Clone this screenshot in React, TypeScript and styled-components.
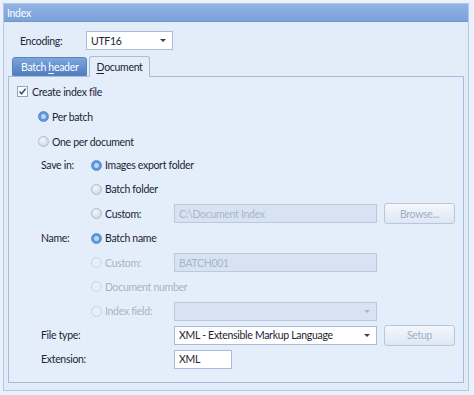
import styled, { createGlobalStyle } from "styled-components";

const GlobalStyle = createGlobalStyle`
  html, body {
    margin: 0;
    padding: 0;
    background: #e9f1fc;
  }
  body {
    font-family: "Lato", "Open Sans", sans-serif;
    font-size: 10.5px;
    letter-spacing: -0.3px;
    color: #1b2535;
  }
`;

const Window = styled.div`
  margin: 3px;
  width: 466px;
  height: 388px;
  box-sizing: border-box;
  border: 1px solid #b4c7de;
  background: #e3edfa;
  display: flex;
  flex-direction: column;
`;

const TitleBar = styled.div`
  height: 17px;
  display: flex;
  align-items: center;
  padding-left: 3px;
  color: #fff;
  background: linear-gradient(#90b4e4, #7aa1da);
  border-bottom: 1px solid #7096cf;
`;

const Content = styled.div`
  flex: 1;
  display: flex;
  flex-direction: column;
  padding: 0 4px 7px 4px;
`;

const EncodingRow = styled.div`
  display: flex;
  align-items: center;
  height: 19px;
  margin-top: 9px;
  padding-left: 12px;
`;

const FieldLabel = styled.span<{ $width?: number }>`
  width: ${(p) => (p.$width ? `${p.$width}px` : "auto")};
  flex-shrink: 0;
`;

const Combo = styled.div<{ $width: number; $disabled?: boolean }>`
  width: ${(p) => p.$width}px;
  height: 19px;
  box-sizing: border-box;
  display: flex;
  align-items: center;
  justify-content: space-between;
  padding: 0 6px 0 4px;
  border: 1px solid ${(p) => (p.$disabled ? "#b9c9de" : "#a9bcd5")};
  background: ${(p) => (p.$disabled ? "#d7e3f3" : "#fff")};
  color: ${(p) => (p.$disabled ? "#a8b5c6" : "#1b2535")};
`;

const Arrow = styled.span<{ $disabled?: boolean }>`
  width: 0;
  height: 0;
  border-left: 3px solid transparent;
  border-right: 3px solid transparent;
  border-top: 3px solid ${(p) => (p.$disabled ? "#a8b5c6" : "#3a3f48")};
`;

const TabStrip = styled.div`
  display: flex;
  align-items: flex-end;
  height: 21px;
  margin-top: 5px;
  padding-left: 4px;
  gap: 2px;
  position: relative;
  z-index: 1;
`;

const Tab = styled.div<{ $active?: boolean }>`
  height: ${(p) => (p.$active ? 21 : 19)}px;
  box-sizing: border-box;
  display: flex;
  align-items: center;
  padding: 0 ${(p) => (p.$active ? 6 : 8)}px;
  border-radius: 3px 3px 0 0;
  border: 1px solid ${(p) => (p.$active ? "#a6bcd9" : "#5a83bf")};
  border-bottom: ${(p) => (p.$active ? "1px solid #e4eefb" : "1px solid #5a83bf")};
  margin-bottom: ${(p) => (p.$active ? -1 : 0)}px;
  background: ${(p) =>
    p.$active ? "#e4eefb" : "linear-gradient(#7ea6dc, #4f7dc0)"};
  color: ${(p) => (p.$active ? "#1b2535" : "#fff")};

  u {
    text-decoration: underline;
    text-underline-offset: 2px;
  }
`;

const TabPanel = styled.div`
  flex: 1;
  border: 1px solid #a6bcd9;
  background: #e4eefb;
  padding: 2px 8px 0 8px;
  display: flex;
  flex-direction: column;
`;

const OptionLine = styled.div<{ $indent?: number; $pitch?: number }>`
  display: flex;
  align-items: center;
  height: ${(p) => p.$pitch ?? 25}px;
  padding-left: ${(p) => p.$indent ?? 0}px;
`;

const Box = styled.span`
  width: 11px;
  height: 11px;
  box-sizing: border-box;
  border: 1px solid #8fa6c5;
  background: linear-gradient(#f6f9fd, #ffffff);
  margin-right: 4px;
  display: flex;
  align-items: center;
  justify-content: center;
`;

const Circle = styled.span<{ $checked?: boolean; $disabled?: boolean }>`
  width: 11px;
  height: 11px;
  box-sizing: border-box;
  border-radius: 50%;
  flex-shrink: 0;
  margin-right: 3px;
  display: flex;
  align-items: center;
  justify-content: center;
  border: 1px solid
    ${(p) => (p.$checked ? "#5b8fd3" : p.$disabled ? "#c9d4e2" : "#aebccd")};
  background: ${(p) =>
    p.$checked
      ? "radial-gradient(circle, #b9d6f6 0 2px, #5f96da 3px)"
      : p.$disabled
      ? "#e7eef8"
      : "radial-gradient(circle at 40% 35%, #f5f7fa, #c6d0dc)"};
`;

const OptionText = styled.span<{ $disabled?: boolean }>`
  color: ${(p) => (p.$disabled ? "#a6b3c4" : "#1b2535")};
  white-space: nowrap;
`;

const OptionsGrid = styled.div`
  display: grid;
  grid-template-columns: 50px 83px 210px 71px;
  grid-auto-rows: 20px;
  row-gap: 4.4px;
  align-items: center;
  padding-left: 24px;
  margin-top: 1px;
`;

const FileGrid = styled(OptionsGrid)`
  row-gap: 4px;
  margin-top: 4px;
`;

const Cell = styled.div<{ $col: number; $span?: number }>`
  grid-column: ${(p) => p.$col} / span ${(p) => p.$span ?? 1};
  display: flex;
  align-items: center;
`;

const TextBox = styled.div<{ $width: number; $disabled?: boolean }>`
  width: ${(p) => p.$width}px;
  height: 19px;
  box-sizing: border-box;
  display: flex;
  align-items: center;
  padding-left: 4px;
  border: 1px solid ${(p) => (p.$disabled ? "#b9c9de" : "#a9bcd5")};
  background: ${(p) => (p.$disabled ? "#d7e3f3" : "#fff")};
  color: ${(p) => (p.$disabled ? "#a8b5c6" : "#1b2535")};
`;

const PushButton = styled.div`
  width: 71px;
  height: 21px;
  box-sizing: border-box;
  display: flex;
  align-items: center;
  justify-content: center;
  border: 1px solid #b8c7dc;
  border-radius: 3px;
  background: linear-gradient(#f4f7fc, #dde7f4);
  color: #a2afc1;
`;

function Radio({ label, checked, disabled }: { label: string; checked?: boolean; disabled?: boolean }) {
  return (
    <>
      <Circle $checked={checked} $disabled={disabled} />
      <OptionText $disabled={disabled}>{label}</OptionText>
    </>
  );
}

export default function App() {
  return (
    <>
      <GlobalStyle />
      <Window>
        <TitleBar>Index</TitleBar>
        <Content>
          <EncodingRow>
            <FieldLabel $width={66}>Encoding:</FieldLabel>
            <Combo $width={87}>
              <span>UTF16</span>
              <Arrow />
            </Combo>
          </EncodingRow>

          <TabStrip>
            <Tab>
              Batch&nbsp;<u>h</u>eader
            </Tab>
            <Tab $active>
              <u>D</u>ocument
            </Tab>
          </TabStrip>

          <TabPanel>
            <OptionLine>
              <Box>
                <svg width="9" height="9" viewBox="0 0 9 9">
                  <path d="M1.5 4.5 L3.6 6.8 L7.6 1.8" fill="none" stroke="#2f4c7c" strokeWidth="1.4" />
                </svg>
              </Box>
              <OptionText>Create index file</OptionText>
            </OptionLine>
            <OptionLine $indent={21}>
              <Radio label="Per batch" checked />
            </OptionLine>
            <OptionLine $indent={21}>
              <Radio label="One per document" />
            </OptionLine>

            <OptionsGrid>
              <Cell $col={1}>Save in:</Cell>
              <Cell $col={2} $span={3}>
                <Radio label="Images export folder" checked />
              </Cell>

              <Cell $col={2} $span={3}>
                <Radio label="Batch folder" />
              </Cell>

              <Cell $col={2}>
                <Radio label="Custom:" />
              </Cell>
              <Cell $col={3}>
                <TextBox $width={203} $disabled>
                  C:\Document Index
                </TextBox>
              </Cell>
              <Cell $col={4}>
                <PushButton>Browse...</PushButton>
              </Cell>

              <Cell $col={1}>Name:</Cell>
              <Cell $col={2} $span={3}>
                <Radio label="Batch name" checked />
              </Cell>

              <Cell $col={2}>
                <Radio label="Custom:" disabled />
              </Cell>
              <Cell $col={3}>
                <TextBox $width={203} $disabled>
                  BATCH001
                </TextBox>
              </Cell>

              <Cell $col={2} $span={3}>
                <Radio label="Document number" disabled />
              </Cell>

              <Cell $col={2}>
                <Radio label="Index field:" disabled />
              </Cell>
              <Cell $col={3}>
                <Combo $width={203} $disabled>
                  <span />
                  <Arrow $disabled />
                </Combo>
              </Cell>
            </OptionsGrid>

            <FileGrid>
              <Cell $col={1} $span={2}>File type:</Cell>
              <Cell $col={3}>
                <Combo $width={203}>
                  <span>XML - Extensible Markup Language</span>
                  <Arrow />
                </Combo>
              </Cell>
              <Cell $col={4}>
                <PushButton>Setup</PushButton>
              </Cell>

              <Cell $col={1} $span={2}>Extension:</Cell>
              <Cell $col={3}>
                <TextBox $width={58}>XML</TextBox>
              </Cell>
            </FileGrid>
          </TabPanel>
        </Content>
      </Window>
    </>
  );
}
